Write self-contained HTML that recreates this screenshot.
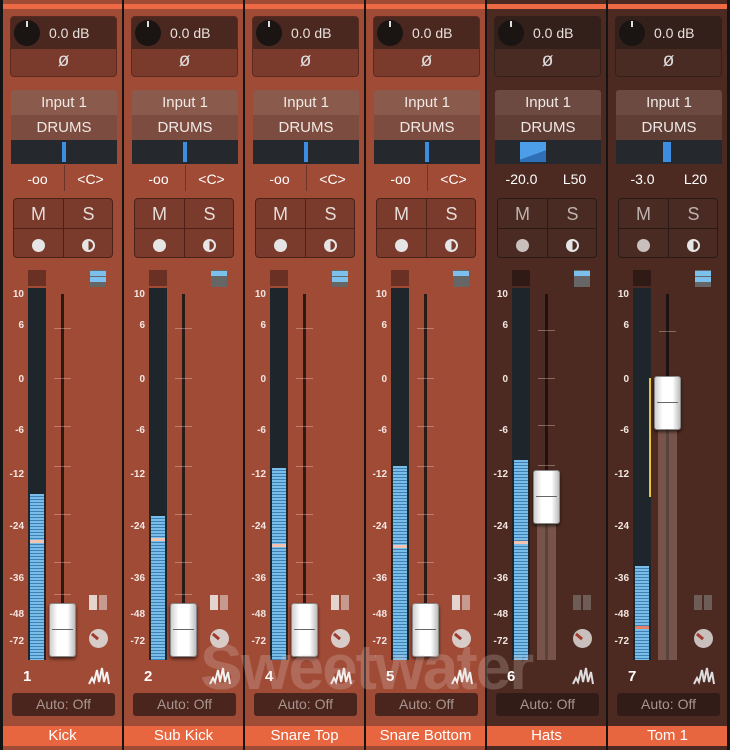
<!DOCTYPE html>
<html><head><meta charset="utf-8"><style>
*{margin:0;padding:0;box-sizing:border-box}
body{width:730px;height:750px;background:#141414;position:relative;overflow:hidden;font-family:"Liberation Sans",sans-serif;color:#eee}
.s{position:absolute;top:0;width:119px;height:750px;background:#a04b36}
.s.d{background:#4d2a21}
.ab{position:absolute}
.tb{left:0;top:4px;width:119px;height:5px;background:#ee6a45}
.gain{left:7px;top:16px;width:107px;height:61px;border-radius:4px;background:#7a3b2c;overflow:hidden;border:1px solid #5a2a1f}
.d .gain{background:#4a2b24;border-color:#33201a}
.gain .t{position:absolute;left:0;top:0;width:100%;height:32px;background:#4a271f}
.d .gain .t{background:#33201b}
.knob{position:absolute;left:3px;top:3px;width:26px;height:26px;border-radius:50%;background:#1a1412}
.knob:after{content:"";position:absolute;left:12px;top:1px;width:2px;height:6px;background:#ddd}
.db{position:absolute;left:38px;top:8px;font-size:14px;color:#e8e0dc}
.phi{position:absolute;left:0;top:33px;width:100%;text-align:center;font-size:19px;color:#ddd}
.inp{left:8px;top:90px;width:106px;height:50px;background:#8a5a4c;border-radius:3px 3px 0 0}
.d .inp{background:#6c4a42}
.inp div{height:25px;line-height:25px;text-align:center;font-size:15px;color:#f0e8e4}
.inp div+div{background:#7d4c40}
.d .inp div+div{background:#5f3e36}
.pan{left:8px;top:140px;width:106px;height:24px;background:#25282c}
.pm{position:absolute;top:2px;height:20px;background:#3d8de0}
.vals{left:8px;top:165px;width:106px;height:26px;font-size:14px;color:#fff}
.vals span{position:absolute;top:6px;width:53px;text-align:center}
.vals i{position:absolute;left:53px;top:0;width:1px;height:26px;background:#6a3428}
.ms{left:10px;top:198px;width:100px;height:60px;border:1px solid #4a2219;border-radius:4px;background:#7a3b2c;overflow:hidden}
.d .ms{background:#4a2b24;border-color:#2a1a15}
.ms div{position:absolute;width:50px;height:30px;text-align:center;line-height:30px;font-size:18px;color:#e6dcd8;border-right:1px solid #4a2219;border-bottom:1px solid #4a2219}
.d .ms div{color:#bdb2ae;border-color:#2a1a15}
.dot{display:inline-block;width:13px;height:13px;border-radius:50%;background:#e5e5e5;vertical-align:middle}
.hd{display:inline-block;width:13px;height:13px;border-radius:50%;border:2px solid #e5e5e5;background:linear-gradient(90deg,#e5e5e5 50%,transparent 50%);vertical-align:middle}
.sq{left:25px;top:270px;width:18px;height:16px;background:#6a3024}
.d .sq{background:#301a15}
.ic{left:87px;top:270px;width:16px;height:17px;background:#666}
.ic b{position:absolute;left:0;width:16px;height:5px;background:#7cc0ee}
.meter{left:25px;top:288px;width:18px;height:372px;background:#1e262b}
.fill{position:absolute;left:2px;right:2px;bottom:0;background:repeating-linear-gradient(#79bde9 0 2px,#3f7fb4 2px 3px)}
.pk{position:absolute;left:2px;right:2px;height:3px;background:#f2c3b0}
.sc{position:absolute;right:98px;font-size:10px;font-weight:bold;color:#f2e6e2;text-align:right;width:20px}
.trk{left:58px;top:294px;width:3px;background:#2a1a15}
.tk{position:absolute;left:51px;width:17px;height:1px;background:rgba(255,220,210,.35)}
.cap{position:absolute;left:46px;width:27px;height:54px;border-radius:3px;background:linear-gradient(90deg,#cfcfcf,#fff 30%,#fff 70%,#bdbdbd);box-shadow:0 2px 3px rgba(0,0,0,.6);border:1px solid #888}
.cap:after{content:"";position:absolute;left:2px;right:2px;top:25px;height:1px;background:#666}
.shade{position:absolute;left:50px;width:19px;background:rgba(200,160,150,.35)}
.pair{left:86px;top:595px;width:18px;height:15px}
.pair b{position:absolute;top:0;width:8px;height:15px;background:#e4d4d0}
.pair b+b{left:10px;background:#c69a8e}
.kn{left:86px;top:629px;width:19px;height:19px;border-radius:50%;background:#d8ccc8}
.kn:after{content:"";position:absolute;left:2px;top:6px;width:8px;height:3px;background:#a13a2e;transform:rotate(40deg)}
.num{left:20px;top:668px;font-size:15px;font-weight:bold;color:#fff}
.wave{left:85px;top:666px}
.auto{left:9px;top:693px;width:103px;height:23px;background:#4a251d;border-radius:3px;text-align:center;line-height:23px;font-size:14px;color:#a89690}
.d .auto{background:#311c17}
.nm{left:0;top:726px;width:119px;height:20px;background:#e8663f;text-align:center;font-size:15px;line-height:20px;color:#fff}
.wm{position:absolute;left:200px;top:630px;font-size:64px;font-weight:bold;color:rgba(220,200,195,.25);letter-spacing:-2px}
</style></head><body>

<div class="s" style="left:3px">
<div class="ab tb"></div>
<div class="ab gain"><div class="t"><div class="knob"></div><div class="db">0.0 dB</div></div><div class="phi">ø</div></div>
<div class="ab inp"><div>Input 1</div><div>DRUMS</div></div>
<div class="ab pan"><div class="pm" style="left:51px;width:4px"></div></div>
<div class="ab vals"><span style="left:0">-oo</span><i></i><span style="left:53px">&lt;C&gt;</span></div>
<div class="ab ms"><div style="left:0;top:0">M</div><div style="left:50px;top:0">S</div><div style="left:0;top:30px"><span class="dot"></span></div><div style="left:50px;top:30px"><span class="hd"></span></div></div>
<div class="ab sq"></div><div class="ab ic"><b style="top:1px"></b><b style="top:7px"></b></div>
<div class="ab meter"><div class="fill" style="height:166px"></div><div class="pk" style="top:252px"></div></div>
<div class="sc" style="top:289px">10</div><div class="sc" style="top:320px">6</div><div class="sc" style="top:374px">0</div><div class="sc" style="top:425px">-6</div><div class="sc" style="top:469px">-12</div><div class="sc" style="top:521px">-24</div><div class="sc" style="top:573px">-36</div><div class="sc" style="top:609px">-48</div><div class="sc" style="top:636px">-72</div>
<div class="ab trk" style="height:310px"></div>
<div class="tk" style="top:328px"></div><div class="tk" style="top:378px"></div><div class="tk" style="top:426px"></div><div class="tk" style="top:466px"></div><div class="tk" style="top:514px"></div><div class="tk" style="top:562px"></div><div class="tk" style="top:594px"></div>
<div class="cap" style="top:603px"></div>
<div class="ab pair"><b></b><b></b></div><div class="ab kn"></div>
<div class="ab num">1</div>
<svg class="ab wave" width="24" height="20"><path d="M1 18 L4 12 L6 16 L9 4 L11 16 L14 2 L16 16 L19 6 L21 18" stroke="#f2f2f2" stroke-width="2" fill="none"/></svg>
<div class="ab auto">Auto: Off</div>
<div class="ab nm">Kick</div>
</div>

<div class="s" style="left:124px">
<div class="ab tb"></div>
<div class="ab gain"><div class="t"><div class="knob"></div><div class="db">0.0 dB</div></div><div class="phi">ø</div></div>
<div class="ab inp"><div>Input 1</div><div>DRUMS</div></div>
<div class="ab pan"><div class="pm" style="left:51px;width:4px"></div></div>
<div class="ab vals"><span style="left:0">-oo</span><i></i><span style="left:53px">&lt;C&gt;</span></div>
<div class="ab ms"><div style="left:0;top:0">M</div><div style="left:50px;top:0">S</div><div style="left:0;top:30px"><span class="dot"></span></div><div style="left:50px;top:30px"><span class="hd"></span></div></div>
<div class="ab sq"></div><div class="ab ic"><b style="top:1px"></b></div>
<div class="ab meter"><div class="fill" style="height:144px"></div><div class="pk" style="top:250px"></div></div>
<div class="sc" style="top:289px">10</div><div class="sc" style="top:320px">6</div><div class="sc" style="top:374px">0</div><div class="sc" style="top:425px">-6</div><div class="sc" style="top:469px">-12</div><div class="sc" style="top:521px">-24</div><div class="sc" style="top:573px">-36</div><div class="sc" style="top:609px">-48</div><div class="sc" style="top:636px">-72</div>
<div class="ab trk" style="height:310px"></div>
<div class="tk" style="top:328px"></div><div class="tk" style="top:378px"></div><div class="tk" style="top:426px"></div><div class="tk" style="top:466px"></div><div class="tk" style="top:514px"></div><div class="tk" style="top:562px"></div><div class="tk" style="top:594px"></div>
<div class="cap" style="top:603px"></div>
<div class="ab pair"><b></b><b></b></div><div class="ab kn"></div>
<div class="ab num">2</div>
<svg class="ab wave" width="24" height="20"><path d="M1 18 L4 12 L6 16 L9 4 L11 16 L14 2 L16 16 L19 6 L21 18" stroke="#f2f2f2" stroke-width="2" fill="none"/></svg>
<div class="ab auto">Auto: Off</div>
<div class="ab nm">Sub Kick</div>
</div>

<div class="s" style="left:245px">
<div class="ab tb"></div>
<div class="ab gain"><div class="t"><div class="knob"></div><div class="db">0.0 dB</div></div><div class="phi">ø</div></div>
<div class="ab inp"><div>Input 1</div><div>DRUMS</div></div>
<div class="ab pan"><div class="pm" style="left:51px;width:4px"></div></div>
<div class="ab vals"><span style="left:0">-oo</span><i></i><span style="left:53px">&lt;C&gt;</span></div>
<div class="ab ms"><div style="left:0;top:0">M</div><div style="left:50px;top:0">S</div><div style="left:0;top:30px"><span class="dot"></span></div><div style="left:50px;top:30px"><span class="hd"></span></div></div>
<div class="ab sq"></div><div class="ab ic"><b style="top:1px"></b><b style="top:7px"></b></div>
<div class="ab meter"><div class="fill" style="height:192px"></div><div class="pk" style="top:256px"></div></div>
<div class="sc" style="top:289px">10</div><div class="sc" style="top:320px">6</div><div class="sc" style="top:374px">0</div><div class="sc" style="top:425px">-6</div><div class="sc" style="top:469px">-12</div><div class="sc" style="top:521px">-24</div><div class="sc" style="top:573px">-36</div><div class="sc" style="top:609px">-48</div><div class="sc" style="top:636px">-72</div>
<div class="ab trk" style="height:310px"></div>
<div class="tk" style="top:328px"></div><div class="tk" style="top:378px"></div><div class="tk" style="top:426px"></div><div class="tk" style="top:466px"></div><div class="tk" style="top:514px"></div><div class="tk" style="top:562px"></div><div class="tk" style="top:594px"></div>
<div class="cap" style="top:603px"></div>
<div class="ab pair"><b></b><b></b></div><div class="ab kn"></div>
<div class="ab num">4</div>
<svg class="ab wave" width="24" height="20"><path d="M1 18 L4 12 L6 16 L9 4 L11 16 L14 2 L16 16 L19 6 L21 18" stroke="#f2f2f2" stroke-width="2" fill="none"/></svg>
<div class="ab auto">Auto: Off</div>
<div class="ab nm">Snare Top</div>
</div>

<div class="s" style="left:366px">
<div class="ab tb"></div>
<div class="ab gain"><div class="t"><div class="knob"></div><div class="db">0.0 dB</div></div><div class="phi">ø</div></div>
<div class="ab inp"><div>Input 1</div><div>DRUMS</div></div>
<div class="ab pan"><div class="pm" style="left:51px;width:4px"></div></div>
<div class="ab vals"><span style="left:0">-oo</span><i></i><span style="left:53px">&lt;C&gt;</span></div>
<div class="ab ms"><div style="left:0;top:0">M</div><div style="left:50px;top:0">S</div><div style="left:0;top:30px"><span class="dot"></span></div><div style="left:50px;top:30px"><span class="hd"></span></div></div>
<div class="ab sq"></div><div class="ab ic"><b style="top:1px"></b></div>
<div class="ab meter"><div class="fill" style="height:194px"></div><div class="pk" style="top:257px"></div></div>
<div class="sc" style="top:289px">10</div><div class="sc" style="top:320px">6</div><div class="sc" style="top:374px">0</div><div class="sc" style="top:425px">-6</div><div class="sc" style="top:469px">-12</div><div class="sc" style="top:521px">-24</div><div class="sc" style="top:573px">-36</div><div class="sc" style="top:609px">-48</div><div class="sc" style="top:636px">-72</div>
<div class="ab trk" style="height:310px"></div>
<div class="tk" style="top:328px"></div><div class="tk" style="top:378px"></div><div class="tk" style="top:426px"></div><div class="tk" style="top:466px"></div><div class="tk" style="top:514px"></div><div class="tk" style="top:562px"></div><div class="tk" style="top:594px"></div>
<div class="cap" style="top:603px"></div>
<div class="ab pair"><b></b><b></b></div><div class="ab kn"></div>
<div class="ab num">5</div>
<svg class="ab wave" width="24" height="20"><path d="M1 18 L4 12 L6 16 L9 4 L11 16 L14 2 L16 16 L19 6 L21 18" stroke="#f2f2f2" stroke-width="2" fill="none"/></svg>
<div class="ab auto">Auto: Off</div>
<div class="ab nm">Snare Bottom</div>
</div>

<div class="s d" style="left:487px">
<div class="ab tb"></div>
<div class="ab gain"><div class="t"><div class="knob"></div><div class="db">0.0 dB</div></div><div class="phi">ø</div></div>
<div class="ab inp"><div>Input 1</div><div>DRUMS</div></div>
<div class="ab pan"><div class="pm" style="left:25px;width:26px;background:linear-gradient(160deg,#4d9ee8 60%,#2f6fb8 60%)"></div></div>
<div class="ab vals"><span style="left:0">-20.0</span><span style="left:53px">L50</span></div>
<div class="ab ms"><div style="left:0;top:0">M</div><div style="left:50px;top:0">S</div><div style="left:0;top:30px"><span class="dot" style="background:#c9c0bd"></span></div><div style="left:50px;top:30px"><span class="hd"></span></div></div>
<div class="ab sq"></div><div class="ab ic"><b style="top:1px"></b></div>
<div class="ab meter"><div class="fill" style="height:200px"></div><div class="pk" style="top:253px"></div></div>
<div class="sc" style="top:289px">10</div><div class="sc" style="top:320px">6</div><div class="sc" style="top:374px">0</div><div class="sc" style="top:425px">-6</div><div class="sc" style="top:469px">-12</div><div class="sc" style="top:521px">-24</div><div class="sc" style="top:573px">-36</div><div class="sc" style="top:609px">-48</div><div class="sc" style="top:636px">-72</div>
<div class="ab trk" style="height:366px;background:#1e1210"></div>
<div class="shade" style="top:520px;height:140px"></div>
<div class="tk" style="top:330px"></div><div class="tk" style="top:378px"></div><div class="tk" style="top:425px"></div><div class="tk" style="top:465px"></div>
<div class="cap" style="top:470px"></div>
<div class="ab pair"><b style="background:#6e5c57"></b><b style="background:#6e5c57"></b></div><div class="ab kn" style="background:#c9c0bd"></div>
<div class="ab num">6</div>
<svg class="ab wave" width="24" height="20"><path d="M1 18 L4 12 L6 16 L9 4 L11 16 L14 2 L16 16 L19 6 L21 18" stroke="#ddd" stroke-width="2" fill="none"/></svg>
<div class="ab auto">Auto: Off</div>
<div class="ab nm">Hats</div>
</div>

<div class="s d" style="left:608px">
<div class="ab tb"></div>
<div class="ab gain"><div class="t"><div class="knob"></div><div class="db">0.0 dB</div></div><div class="phi">ø</div></div>
<div class="ab inp"><div>Input 1</div><div>DRUMS</div></div>
<div class="ab pan"><div class="pm" style="left:47px;width:8px"></div></div>
<div class="ab vals"><span style="left:0">-3.0</span><span style="left:53px">L20</span></div>
<div class="ab ms"><div style="left:0;top:0">M</div><div style="left:50px;top:0">S</div><div style="left:0;top:30px"><span class="dot" style="background:#c9c0bd"></span></div><div style="left:50px;top:30px"><span class="hd"></span></div></div>
<div class="ab sq"></div><div class="ab ic"><b style="top:1px"></b><b style="top:7px"></b></div>
<div class="ab meter"><div class="fill" style="height:94px"></div><div class="pk" style="top:338px;background:#e8806a"></div></div>
<div class="ab" style="left:41px;top:378px;width:2px;height:119px;background:#e8c23a"></div>
<div class="sc" style="top:289px">10</div><div class="sc" style="top:320px">6</div><div class="sc" style="top:374px">0</div><div class="sc" style="top:425px">-6</div><div class="sc" style="top:469px">-12</div><div class="sc" style="top:521px">-24</div><div class="sc" style="top:573px">-36</div><div class="sc" style="top:609px">-48</div><div class="sc" style="top:636px">-72</div>
<div class="ab trk" style="height:366px;background:#1e1210"></div>
<div class="shade" style="top:428px;height:232px"></div>
<div class="tk" style="top:331px"></div>
<div class="cap" style="top:376px"></div>
<div class="ab pair"><b style="background:#6e5c57"></b><b style="background:#6e5c57"></b></div><div class="ab kn" style="background:#c9c0bd"></div>
<div class="ab num">7</div>
<svg class="ab wave" width="24" height="20"><path d="M1 18 L4 12 L6 16 L9 4 L11 16 L14 2 L16 16 L19 6 L21 18" stroke="#ddd" stroke-width="2" fill="none"/></svg>
<div class="ab auto">Auto: Off</div>
<div class="ab nm">Tom 1</div>
</div>

<div class="wm">Sweetwater</div>
</body></html>
